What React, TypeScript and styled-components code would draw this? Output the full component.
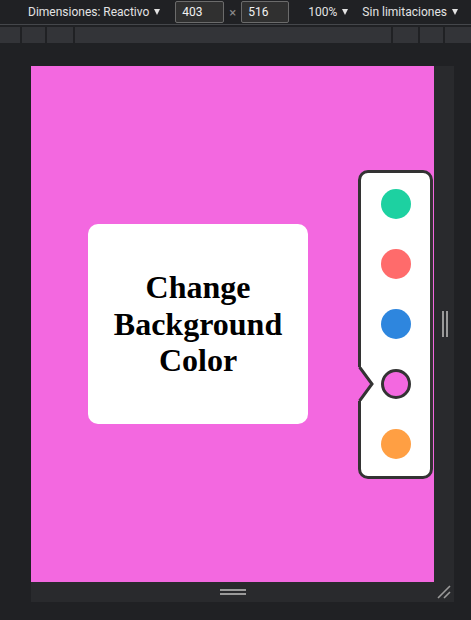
import React from "react";
import styled, { createGlobalStyle } from "styled-components";

const colors = ["#1dd1a1", "#ff6b6b", "#2e86de", "#f368e0", "#ff9f43"];

const GlobalStyle = createGlobalStyle`
  html, body {
    margin: 0;
    padding: 0;
    background: #202124;
  }
  * {
    box-sizing: border-box;
  }
`;

const Shell = styled.div`
  width: 471px;
  height: 620px;
  overflow: hidden;
  background: #202124;
  font-family: Roboto, "Noto Sans", sans-serif;
`;

const Toolbar = styled.div`
  height: 25px;
  display: flex;
  align-items: center;
  padding-left: 28px;
  border-bottom: 1px solid #45474b;
  color: #e3e3e3;
  font-size: 12px;
`;

const Dropdown = styled.div<{ $before?: number; $after: number }>`
  display: flex;
  align-items: center;
  gap: 5px;
  margin-left: ${(p) => p.$before ?? 0}px;
  margin-right: ${(p) => p.$after}px;
  white-space: nowrap;
`;

const Caret = styled.span`
  width: 0;
  height: 0;
  border-left: 3px solid transparent;
  border-right: 3px solid transparent;
  border-top: 6px solid #e3e3e3;
  margin-top: -1px;
`;

const SizeInput = styled.div<{ $w: number }>`
  width: ${(p) => p.$w}px;
  height: 22px;
  margin-top: -1px;
  border: 1px solid #6b6b6b;
  border-radius: 2px;
  background: #303030;
  padding-left: 6px;
  display: flex;
  align-items: center;
  color: #f1f1f1;
`;

const Times = styled.span`
  width: 17px;
  text-align: center;
  color: #8a8a8a;
  font-size: 13px;
`;

const MediaBar = styled.div`
  margin-top: 2px;
  height: 16px;
  display: flex;
  gap: 2px;
`;

const MediaSegment = styled.div<{ $w: number }>`
  width: ${(p) => p.$w}px;
  flex: ${(p) => (p.$w === 0 ? 1 : "none")};
  background: #333438;
`;

const Stage = styled.div`
  padding: 23px 0 0 31px;
`;

const Frame = styled.div`
  display: grid;
  grid-template-columns: 403px 20px;
  grid-template-rows: 516px 20px;
`;

const Viewport = styled.div`
  background: #f368e0;
  display: flex;
  align-items: center;
  padding-left: 57px;
  padding-right: 1px;
`;

const Card = styled.div`
  width: 220px;
  height: 200px;
  background: #ffffff;
  border-radius: 10px;
  display: flex;
  align-items: center;
  justify-content: center;
`;

const Title = styled.h1`
  margin: 0;
  font-family: "Liberation Serif", "Times New Roman", serif;
  font-weight: 700;
  font-size: 32px;
  line-height: 1.15;
  text-align: center;
  color: #000;
`;

const Palette = styled.div`
  position: relative;
  margin-left: auto;
  width: 75px;
  height: 309px;
  background: #ffffff;
  border: 3px solid #333333;
  border-radius: 10px;
  display: flex;
  flex-direction: column;
  align-items: center;
  justify-content: center;
  gap: 30px;
`;

const Swatch = styled.button<{ $color: string; $active: boolean }>`
  width: 30px;
  height: 30px;
  padding: 0;
  border-radius: 50%;
  background: ${(p) => p.$color};
  border: ${(p) => (p.$active ? "3px solid #333333" : "none")};
  cursor: pointer;
`;

const Notch = styled.svg<{ $top: number }>`
  position: absolute;
  left: -3px;
  top: ${(p) => p.$top}px;
`;

const SideBar = styled.div`
  background: #292a2d;
  display: flex;
  align-items: center;
  justify-content: center;
  gap: 2px;
  padding-left: 1px;
`;

const VGrip = styled.span`
  width: 2px;
  height: 26px;
  background: #9a9a9a;
`;

const BottomBar = styled.div`
  background: #292a2d;
  display: flex;
  flex-direction: column;
  align-items: center;
  justify-content: center;
  gap: 1.5px;
  padding-left: 1px;
`;

const HGrip = styled.span`
  width: 26px;
  height: 2px;
  background: #9a9a9a;
`;

const Corner = styled.div`
  background: #292a2d;
  display: flex;
  align-items: center;
  justify-content: center;
`;

export default function App() {
  const [active, setActive] = React.useState(3);
  const bg = colors[active];
  // swatch centre sits 31.5px + 60px per step below the inner top; notch is 34px tall
  const notchTop = 14.5 + active * 60;

  return (
    <Shell>
      <GlobalStyle />
      <Toolbar>
        <Dropdown $after={15}>
          Dimensiones: Reactivo <Caret />
        </Dropdown>
        <SizeInput $w={49}>403</SizeInput>
        <Times>×</Times>
        <SizeInput $w={48}>516</SizeInput>
        <Dropdown $before={19} $after={14}>
          100% <Caret />
        </Dropdown>
        <Dropdown $after={0}>
          Sin limitaciones <Caret />
        </Dropdown>
      </Toolbar>
      <MediaBar>
        <MediaSegment $w={20} />
        <MediaSegment $w={23} />
        <MediaSegment $w={26} />
        <MediaSegment $w={316} />
        <MediaSegment $w={25} />
        <MediaSegment $w={23} />
        <MediaSegment $w={0} />
      </MediaBar>
      <Stage>
        <Frame>
          <Viewport style={{ background: bg }}>
            <Card>
              <Title>
                Change
                <br />
                Background
                <br />
                Color
              </Title>
            </Card>
            <Palette>
              {colors.map((c, i) => (
                <Swatch
                  key={c}
                  $color={c}
                  $active={i === active}
                  onClick={() => setActive(i)}
                  aria-label={c}
                />
              ))}
              <Notch $top={notchTop} width="18" height="34" viewBox="0 0 18 34">
                <polygon points="0,0 1.5,0 14,17 1.5,34 0,34" fill={bg} />
                <polyline
                  points="1.5,0 14,17 1.5,34"
                  fill="none"
                  stroke="#333333"
                  strokeWidth="3"
                />
              </Notch>
            </Palette>
          </Viewport>
          <SideBar>
            <VGrip />
            <VGrip />
          </SideBar>
          <BottomBar>
            <HGrip />
            <HGrip />
          </BottomBar>
          <Corner>
            <svg width="14" height="14" viewBox="0 0 14 14">
              <path d="M1 13 L13 1 M7 13 L13 7" stroke="#9a9a9a" strokeWidth="1.6" />
            </svg>
          </Corner>
        </Frame>
      </Stage>
    </Shell>
  );
}
